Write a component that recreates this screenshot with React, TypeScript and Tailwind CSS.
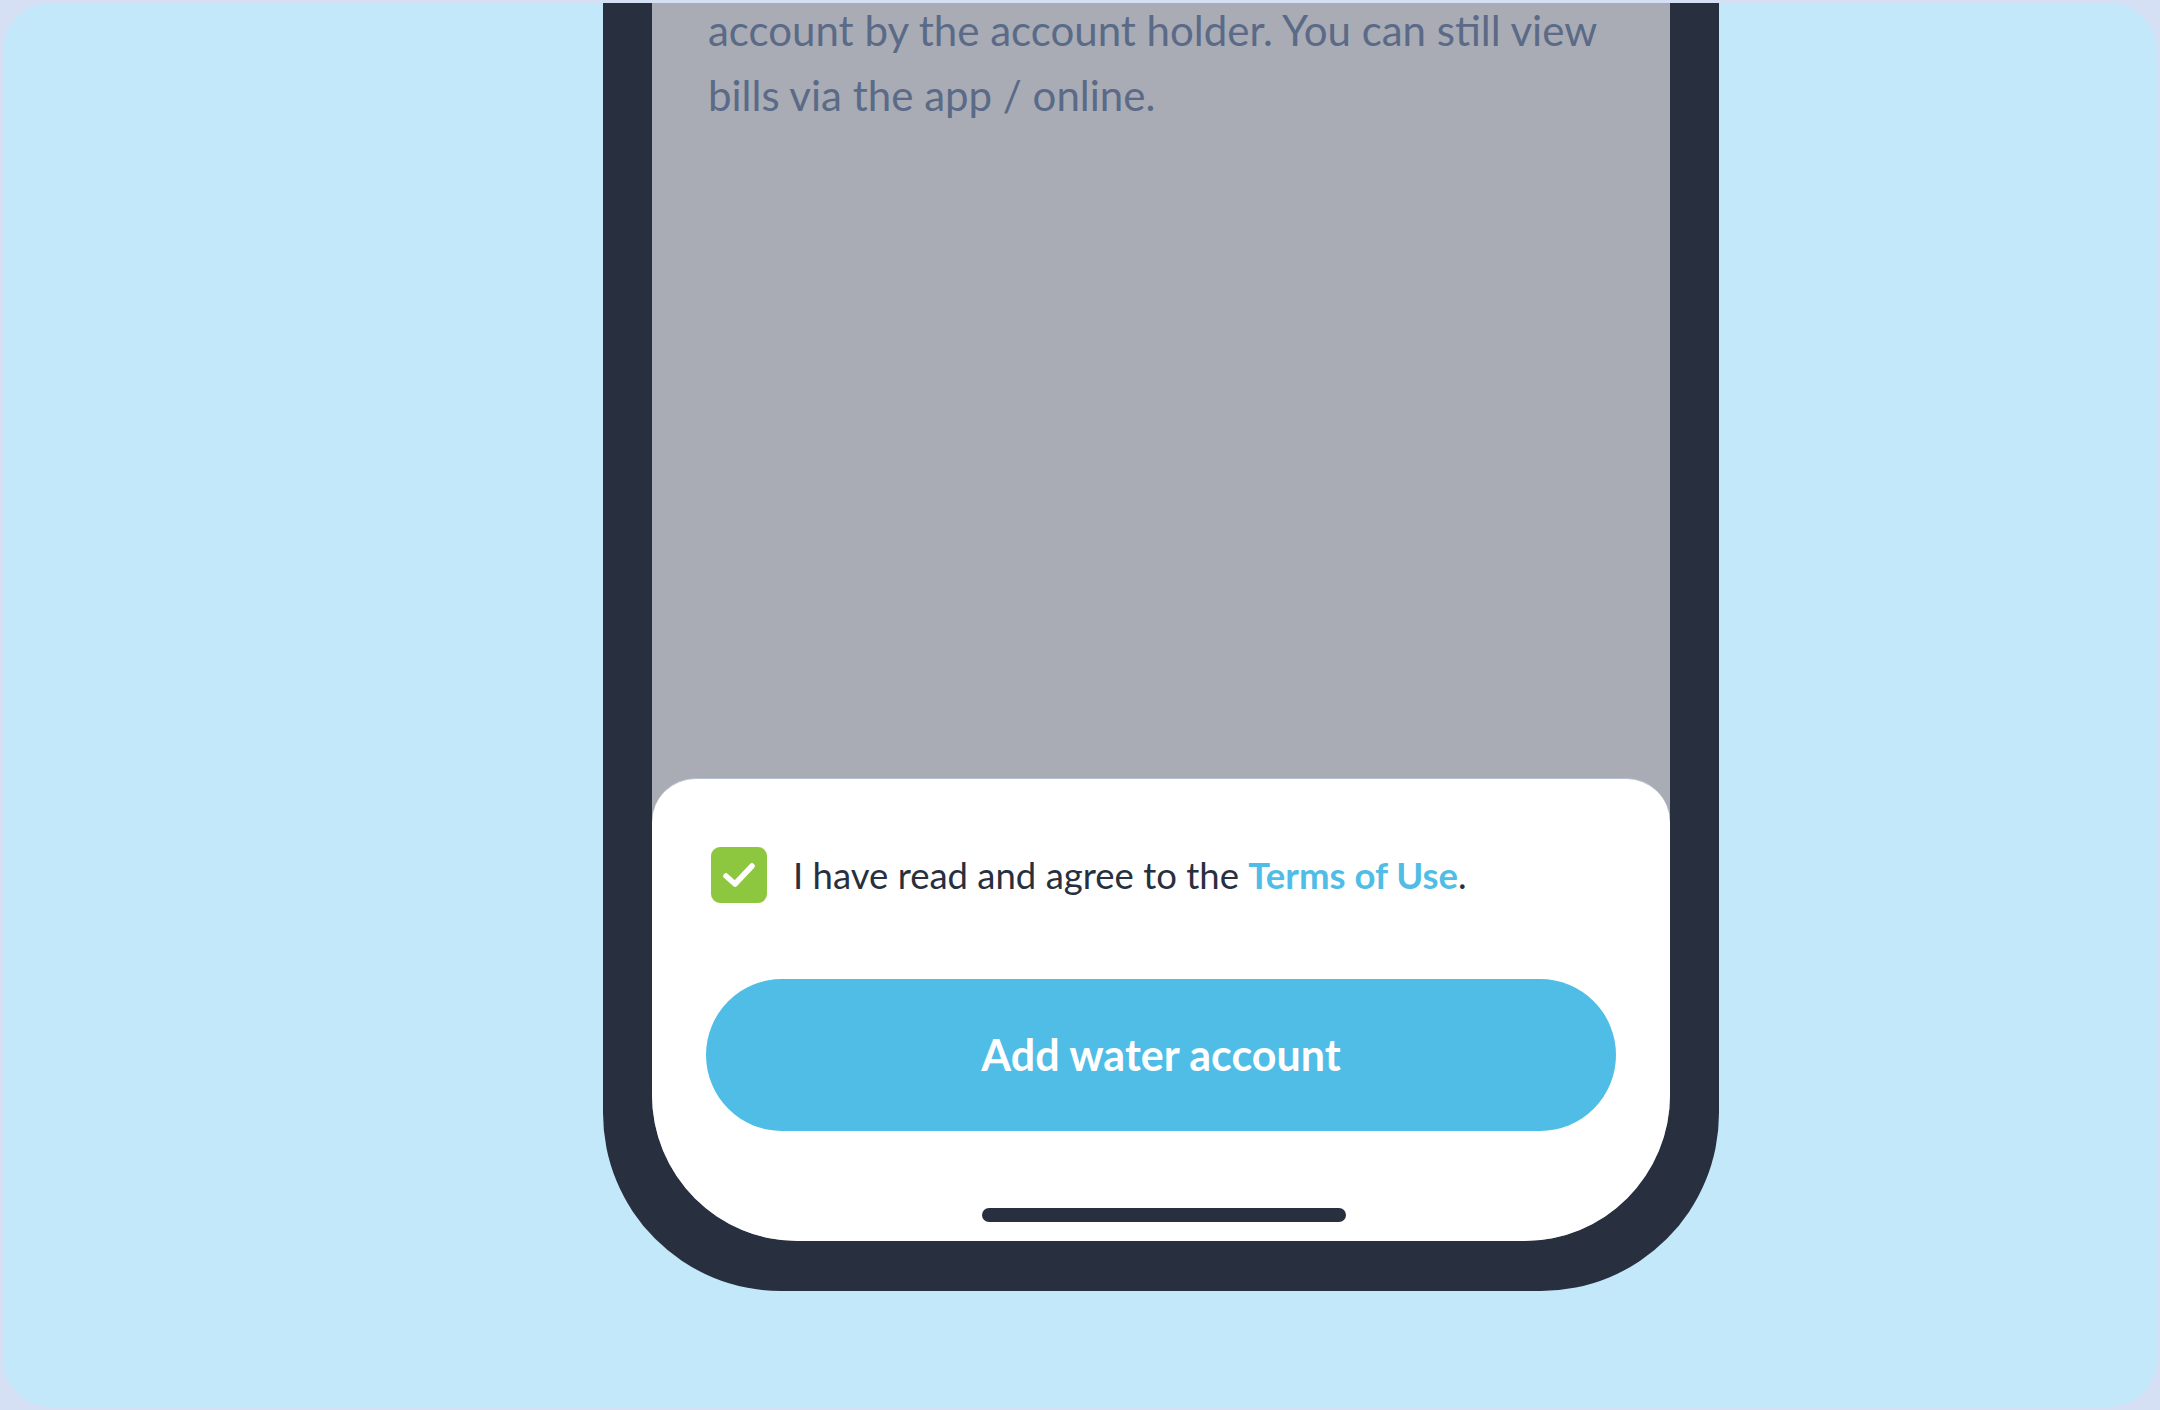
export default function App() {
  return (
    <div className="h-[1410px] w-full bg-[#D5E0F5] p-[3px]" style={{ fontFamily: 'Lato, "Open Sans", sans-serif' }}>
      <div className="h-full w-full rounded-[48px] bg-[#C2E8FA] overflow-hidden flex justify-start">
        <div className="ml-[600px] w-[1116px] h-[1288px] bg-[#282F3E] rounded-b-[178px] px-[49px] pb-[50px] flex">
          <div className="flex-1 flex flex-col rounded-b-[146px] overflow-hidden bg-[#A9ACB5]">
            <div className="flex-1 pl-[56px] pr-[20px]">
              <p className="-mt-[5px] text-[42px] leading-[65px] text-[#5A6A87] whitespace-nowrap">
                account by the account holder. You can still view
                <br />
                bills via the app / online.
              </p>
            </div>
            <div className="h-[463px] bg-white rounded-t-[44px] border-t border-[#B8C0CF] pl-[57px] pr-[54px] pt-[68px] flex flex-col">
              <div className="flex items-center gap-[26px]">
                <div className="ml-[2px] w-[56px] h-[56px] rounded-[9px] bg-[#8DC63F] flex items-center justify-center shrink-0">
                  <svg width="56" height="56" viewBox="0 0 56 56" fill="none">
                    <polyline points="15,29 24,37 41,19" stroke="white" strokeWidth="5.5" strokeLinecap="round" strokeLinejoin="round" />
                  </svg>
                </div>
                <p className="text-[36.5px] text-[#283040] leading-none whitespace-nowrap">
                  I have read and agree to the <span className="text-[#4FBDE6] font-bold">Terms of Use</span>.
                </p>
              </div>
              <button className="mt-[76px] -ml-[3px] h-[152px] rounded-full bg-[#4FBDE6] text-white text-[43px] font-bold flex items-center justify-center">
                Add water account
              </button>
              <div className="mt-[77px] self-center ml-[2px] w-[364px] h-[14px] rounded-full bg-[#283040]" />
            </div>
          </div>
        </div>
      </div>
    </div>
  );
}
